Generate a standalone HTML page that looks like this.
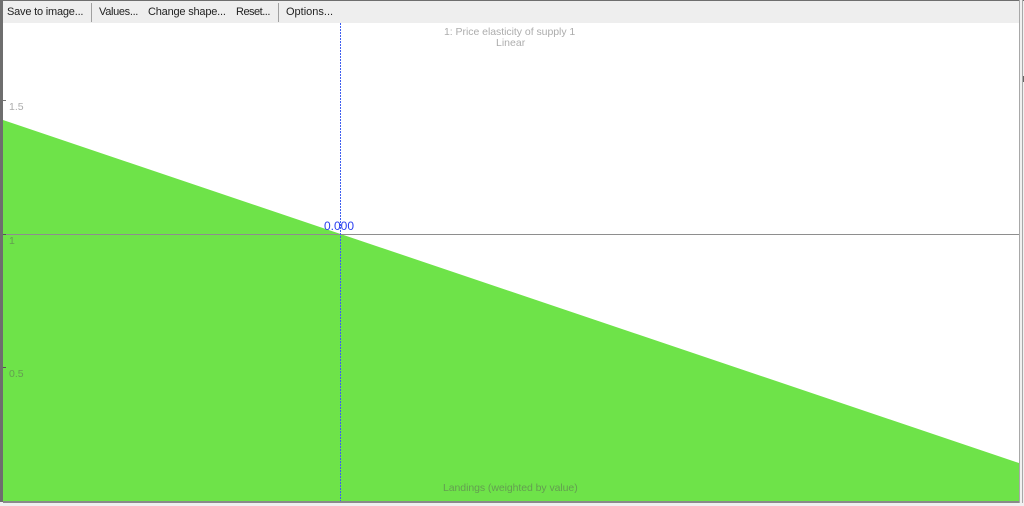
<!DOCTYPE html>
<html>
<head>
<meta charset="utf-8">
<style>
html,body{margin:0;padding:0;width:1024px;height:506px;overflow:hidden;background:#f0f0f0;}
body{position:relative;font-family:"Liberation Sans",sans-serif;}
.a{position:absolute;}
.t{position:absolute;white-space:nowrap;font-size:11px;line-height:13px;color:#222;top:6px;filter:blur(.3px);}
.g{position:absolute;white-space:nowrap;font-size:10.5px;line-height:12px;color:rgba(90,90,90,.5);filter:blur(.3px);}
.sep{position:absolute;top:3px;height:19px;width:1px;background:#a0a0a0;}
</style>
</head>
<body>
<div class="a" style="left:0;top:0;width:1024px;height:1px;background:#6e6e6e"></div>
<div class="a" style="left:0;top:1px;width:1019px;height:22px;background:#eeeeee"></div>
<div class="a" style="left:3px;top:23px;width:1016px;height:479px;background:#fff"></div>
<svg class="a" style="left:0;top:0" width="1024" height="506" viewBox="0 0 1024 506">
<polygon points="3,120 1019,463 1019,501 3,501" fill="#6ee349"/>
<line x1="3" y1="234.5" x2="1019" y2="234.5" stroke="#8e8e8e" stroke-width="1"/>
<line x1="340.5" y1="23" x2="340.5" y2="501" stroke="#3f5ff0" stroke-width="1" stroke-dasharray="2 1"/>
<line x1="3" y1="100.5" x2="6" y2="100.5" stroke="#777" stroke-width="1"/>
<line x1="3" y1="234.5" x2="6" y2="234.5" stroke="#555" stroke-width="1"/>
<line x1="3" y1="367.5" x2="6" y2="367.5" stroke="#555" stroke-width="1"/>
</svg>
<div class="a" style="left:0;top:1px;width:3px;height:501px;background:#6e6e6e"></div>
<div class="a" style="left:3px;top:501px;width:1016px;height:2px;background:#8a8a8a"></div>
<div class="a" style="left:1019px;top:0;width:1px;height:503px;background:#a8a8a8"></div>
<div class="a" style="left:1020px;top:0;width:2px;height:503px;background:#f0f0f0"></div>
<div class="a" style="left:1022px;top:0;width:1px;height:503px;background:#a8a8a8"></div>
<div class="a" style="left:1023px;top:76px;width:1px;height:6px;background:#666"></div>
<div class="t" style="left:7px;letter-spacing:-.2px">Save to image...</div>
<div class="sep" style="left:91px"></div>
<div class="t" style="left:99px;letter-spacing:-.33px">Values...</div>
<div class="t" style="left:148px;letter-spacing:-.2px">Change shape...</div>
<div class="t" style="left:236px;letter-spacing:-.5px">Reset...</div>
<div class="sep" style="left:278px"></div>
<div class="t" style="left:286px">Options...</div>
<div class="g" style="left:444px;top:26px;letter-spacing:-.04px">1: Price elasticity of supply 1</div>
<div class="g" style="left:496px;top:37px">Linear</div>
<div class="g" style="left:9px;top:101px">1.5</div>
<div class="g" style="left:9px;top:235px">1</div>
<div class="g" style="left:9px;top:368px">0.5</div>
<div class="g" style="left:443px;top:482px;letter-spacing:-.07px">Landings (weighted by value)</div>
<div class="a" style="left:324px;top:219px;font-size:12px;line-height:14px;color:#2a3ff0;white-space:nowrap;filter:blur(.3px)">0.000</div>
</body>
</html>
